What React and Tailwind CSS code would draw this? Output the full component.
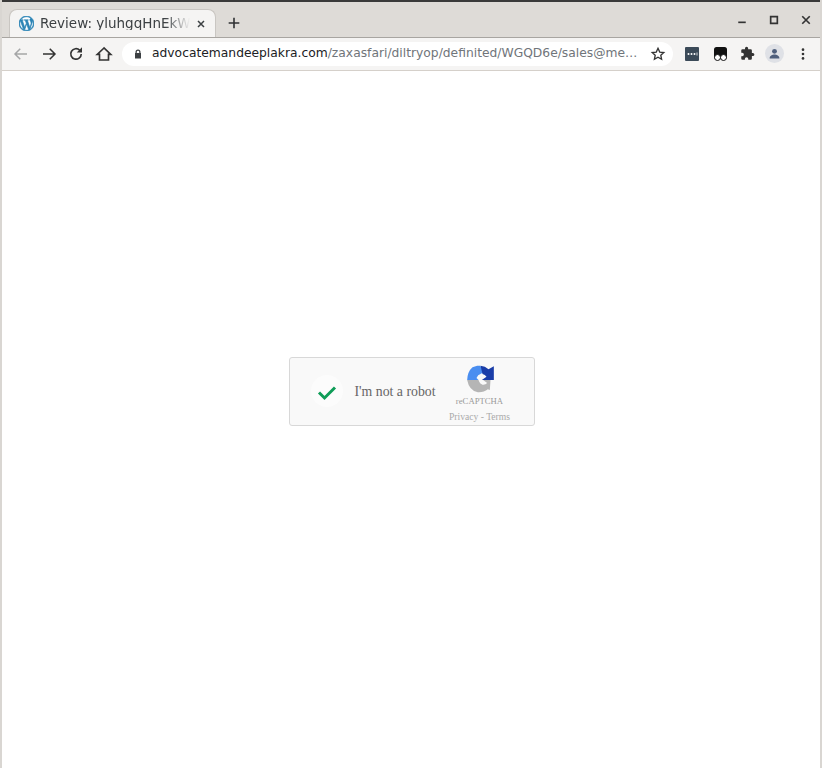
import React from "react";
import { SiWordpress } from "react-icons/si";

const Ico = ({ children, size = 16, vb = "0 0 24 24", className = "" }) => (
  <svg width={size} height={size} viewBox={vb} className={className}>{children}</svg>
);

export default function App() {
  return (
    <div className="h-[768px] w-[822px] overflow-hidden bg-white flex flex-col font-['DejaVu_Sans',sans-serif] border-x-2 border-[#d9d6d2]">
      <div className="h-[2px] bg-[#3a3a3a] -mx-[2px]" />
      <div className="h-[35px] bg-[#dedbd7] flex items-end -mx-[2px] pl-[9px]">
        <div className="w-[207px] h-[28px] bg-[#f5f4f3] rounded-t-[8px] flex items-center pl-[9px] pr-[8px] border border-b-0 border-[#c9c6c2]">
          <span className="w-[15px] h-[15px] rounded-full bg-white shrink-0 flex items-center justify-center">
            <SiWordpress size={15} color="#2b84b5" stroke="#2b84b5" strokeWidth={1} />
          </span>
          <span className="ml-[6px] text-[13.500px] leading-none text-[#3c4043] whitespace-nowrap [mask-image:linear-gradient(to_right,black_125px,transparent_150px)]">Review: yluhgqHnEkW</span>
          <Ico size={12} className="ml-auto shrink-0"><path d="M6 6l12 12M18 6L6 18" stroke="#3c4043" strokeWidth="3" /></Ico>
        </div>
        <Ico size={16} className="ml-[10px] mb-[6px]"><path d="M12 4v16M4 12h16" stroke="#2f3133" strokeWidth="2.400" /></Ico>
        <div className="ml-auto flex items-center mb-[11px]">
          <Ico size={10} className="mr-[22px] mb-[2px]"><path d="M3 20h18" stroke="#333" strokeWidth="4" /></Ico>
          <Ico size={10} className="mr-[22px]"><path d="M4 4h16v16H4z" fill="none" stroke="#333" strokeWidth="4" /></Ico>
          <Ico size={10} className="mr-[11px]"><path d="M3 3l18 18M21 3L3 21" stroke="#333" strokeWidth="4" /></Ico>
        </div>
      </div>
      <div className="h-[31px] bg-[#f5f4f3] border-t border-b border-t-[#a8a5a1] border-b-[#d5d0ca] -mx-[2px] pb-[1px] flex items-center box-content">
        <Ico size={18} className="ml-[12px]"><path d="M20 12H5M11 5l-7 7 7 7" fill="none" stroke="#a5a6a7" strokeWidth="2" /></Ico>
        <Ico size={18} className="ml-[10px]"><path d="M4 12h15M13 5l7 7-7 7" fill="none" stroke="#333" strokeWidth="2" /></Ico>
        <Ico size={18} className="ml-[9px]"><path d="M19 12a7 7 0 1 1-2-5" fill="none" stroke="#333" strokeWidth="2.200" /><path d="M13 10h7V3z" fill="#333" /></Ico>
        <Ico size={18} className="ml-[10px]"><path d="M12 4L3 12.500h3V20h12v-7.500h3z" fill="none" stroke="#333" strokeWidth="2.200" /></Ico>
        <div className="ml-[9px] w-[551px] h-[24px] bg-white rounded-full flex items-center pl-[10px] text-[12.300px]">
          <Ico size={12} className="shrink-0"><path d="M7 10V8a5 5 0 0 1 10 0v2h1v11H6V10z M9.500 10h5V8a2.500 2.500 0 0 0-5 0z" fill="#3c4043" fillRule="evenodd" /></Ico>
          <span className="ml-[8px] whitespace-nowrap text-[#202124]">advocatemandeeplakra.com<span className="text-[#70757a]">/zaxasfari/diltryop/definited/WGQD6e/sales@me…</span></span>
          <Ico size={16} className="ml-auto mr-[7px] shrink-0"><path d="M12 3.500l2.600 5.600 6.100.7-4.500 4.100 1.200 6-5.400-3-5.400 3 1.200-6L3.300 9.800l6.100-.7z" fill="none" stroke="#333" strokeWidth="2" /></Ico>
        </div>
        <svg width="14" height="14" viewBox="0 0 14 14" className="ml-[12px]"><rect width="14" height="14" rx="1" fill="#3b4a58" /><circle cx="3.500" cy="7" r="1" fill="#fff" /><circle cx="6.500" cy="7" r="1" fill="#fff" /><circle cx="9.500" cy="7" r="1" fill="#fff" /><path d="M12 5.500v3" stroke="#fff" strokeWidth="0.800" /></svg>
        <svg width="13" height="14" viewBox="0 0 13 14" className="ml-[15px]"><rect width="13" height="12" rx="2.500" fill="#111" /><circle cx="3.500" cy="10.500" r="3" fill="#fff" stroke="#111" /><circle cx="9.500" cy="10.500" r="3" fill="#fff" stroke="#111" /></svg>
        <Ico size={15} className="ml-[13px]"><path d="M20.500 11H19V7a2 2 0 0 0-2-2h-4V3.500a2.500 2.500 0 0 0-5 0V5H4a2 2 0 0 0-2 2v3.800h1.500a2.700 2.700 0 0 1 0 5.400H2V20a2 2 0 0 0 2 2h3.800v-1.500a2.700 2.700 0 0 1 5.400 0V22H17a2 2 0 0 0 2-2v-4h1.500a2.500 2.500 0 0 0 0-5z" fill="#333" /></Ico>
        <div className="ml-[10px] w-[19px] h-[19px] rounded-full bg-[#dfe1e6] flex items-center justify-center">
          <Ico size={13}><circle cx="12" cy="8" r="4.500" fill="#4f5f7c" /><path d="M3 21c0-5 5-7 9-7s9 2 9 7z" fill="#4f5f7c" /></Ico>
        </div>
        <Ico size={14} className="ml-[12px]"><circle cx="12" cy="4.500" r="2.300" fill="#333" /><circle cx="12" cy="12" r="2.300" fill="#333" /><circle cx="12" cy="19.500" r="2.300" fill="#333" /></Ico>
      </div>
      <div className="flex-1 flex justify-center pt-[286px] pl-[1px]">
        <div className="w-[246px] h-[69px] bg-[#f9f9f9] border border-[#d8d8d8] rounded-[3px] flex font-['Liberation_Serif',serif]">
          <div className="w-[32px] h-[32px] rounded-full bg-[#fcfcfc] mt-[17px] ml-[21px] flex items-center justify-center">
            <Ico size={24} className="mt-[1px]"><path d="M4 12.500l5.500 5.500L20 7.500" fill="none" stroke="#0f9d58" strokeWidth="3" /></Ico>
          </div>
          <span className="ml-[12px] mt-[25px] text-[13.800px] leading-[18px] text-[#666] whitespace-nowrap">I'm not a robot</span>
          <div className="ml-auto mr-[24px] mt-[7px] w-[60px] flex flex-col items-center">
            <svg width="27" height="28" viewBox="560 45 80 84" className="ml-[1px]">
              <path d="M560 90Q561 65 576 52L590 47H599L610 66L600 72Q592 74 588 84L594 90Z" fill="#4a8ef0" />
              <path d="M600 47Q614 48 624 58L640 49V90H604L618 80Q614 74 606 72Z" fill="#1a3da8" />
              <path d="M560 90H594Q598 102 606 104Q615 105 620 99L608 90H630L628 120L622 118Q610 128 592 127Q566 122 560 90Z" fill="#b5b5b5" />
            </svg>
            <span className="text-[8.700px] leading-[10px] mt-[3px] text-[#999]">reCAPTCHA</span>
            <span className="text-[9.600px] leading-[10px] mt-[6px] whitespace-nowrap text-[#aaa]">Privacy - Terms</span>
          </div>
        </div>
      </div>
    </div>
  );
}
